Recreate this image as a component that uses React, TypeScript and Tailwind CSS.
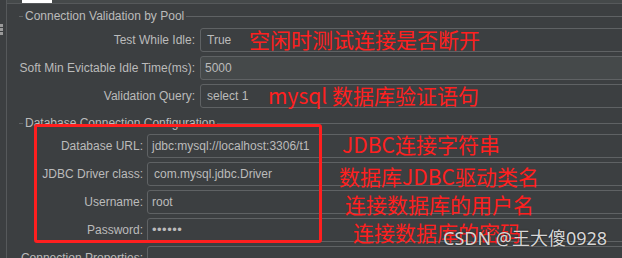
import type { ReactNode } from "react";

interface FieldRowProps {
  label: string;
  value: ReactNode;
  light?: boolean;
  padLeft?: string;
}

function FieldRow({ label, value, light = false, padLeft = "pl-[4px]" }: FieldRowProps) {
  return (
    <>
      <div className="flex h-[24px] items-center justify-end whitespace-nowrap">{label}</div>
      <div
        className={`-mr-[10px] flex h-[24px] items-center rounded-[3px] border border-[#5f6264] ${padLeft} ${
          light ? "bg-[#45494a]" : "bg-[#3c3f41]"
        }`}
      >
        {value}
      </div>
    </>
  );
}

function SectionTitle({ title }: { title: string }) {
  return (
    <div className="flex h-[14px] items-center pl-[12px]">
      <span className="h-px w-[4px] bg-[#5f6264]" />
      <span className="px-[2px] leading-none whitespace-nowrap">{title}</span>
      <span className="h-px flex-1 bg-[#5f6264]" />
    </div>
  );
}

function Note({ top, left, children }: { top: number; left: number; children: ReactNode }) {
  return (
    <div
      className="absolute whitespace-nowrap text-[21px] leading-[21px] text-[#ff1f1f] font-['Noto_Sans_CJK_SC',sans-serif]"
      style={{ top, left }}
    >
      {children}
    </div>
  );
}

export default function App() {
  return (
    <div className="relative flex h-[258px] w-[622px] overflow-hidden bg-[#3c3f41] font-['Liberation_Sans',sans-serif] text-[12px] text-[#bbbbbb]">
      {/* left tool strip */}
      <div className="flex w-[7px] shrink-0 flex-col border-r border-[#56595b] pt-[24px]">
        <div className="flex flex-col gap-[1px]">
          <span className="h-[3px] w-[3px] bg-[#9a9a9a]" />
          <span className="h-[3px] w-[3px] bg-[#9a9a9a]" />
          <span className="h-[3px] w-[3px] bg-[#9a9a9a]" />
        </div>
      </div>

      <div className="flex min-w-0 flex-1 flex-col">
        <div className="h-[4px] shrink-0 border-b border-[#56595b] bg-[#45494a]">
          <div className="ml-[15px] h-[3px] w-[30px] bg-white" />
        </div>

        <div className="mt-[5px]">
          <SectionTitle title="Connection Validation by Pool" />
        </div>
        <div className="mt-[5px] grid grid-cols-[188px_1fr] gap-x-[5px] gap-y-[4px]">
          <FieldRow label="Test While Idle:" value="True" padLeft="pl-[6px]" />
          <FieldRow label="Soft Min Evictable Idle Time(ms):" value="5000" light />
          <FieldRow label="Validation Query:" value="select 1" padLeft="pl-[6px]" />
        </div>

        <div className="mt-[8px]">
          <SectionTitle title="Database Connection Configuration" />
        </div>
        <div className="mt-[4px] grid grid-cols-[136px_1fr] gap-x-[4px] gap-y-[4px]">
          <FieldRow label="Database URL:" value="jdbc:mysql://localhost:3306/t1" />
          <FieldRow label="JDBC Driver class:" value="com.mysql.jdbc.Driver" padLeft="pl-[6px]" />
          <FieldRow label="Username:" value="root" />
          <FieldRow label="Password:" value={<span className="text-[13px] tracking-[0.5px]">••••••</span>} />
          <FieldRow label="Connection Properties:" value="" />
        </div>
      </div>

      {/* annotations */}
      <div className="absolute left-[34px] top-[124px] h-[119px] w-[288px] rounded-[3px] border-[3px] border-[#ff1f1f]" />
      <Note top={29} left={249}>空闲时测试连接是否断开</Note>
      <Note top={85} left={268}>mysql 数据库验证语句</Note>
      <Note top={134} left={342}>JDBC连接字符串</Note>
      <Note top={166} left={339}>数据库JDBC驱动类名</Note>
      <Note top={194} left={345}>连接数据库的用户名</Note>
      <Note top={222} left={353}>连接数据库的密码</Note>

      <div className="absolute left-[443px] top-[228px] whitespace-nowrap text-[18px] leading-[20px] text-[#d6d6d6] [text-shadow:0_0_2px_rgba(0,0,0,0.6)] font-['Noto_Sans','Noto_Sans_CJK_SC',sans-serif]">
        CSDN @王大傻0928
      </div>
    </div>
  );
}
